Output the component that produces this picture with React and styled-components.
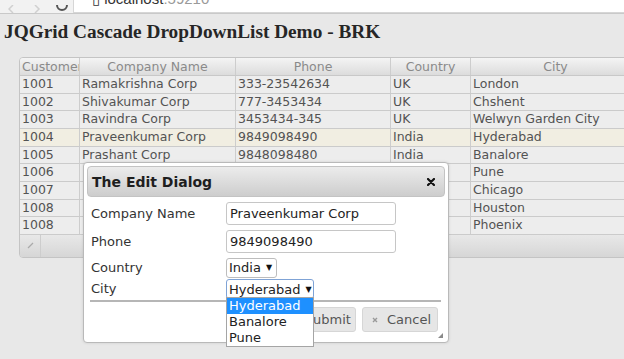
import React from "react";
import styled, { createGlobalStyle } from "styled-components";

const GlobalStyle = createGlobalStyle`
  html, body {
    margin: 0;
    padding: 0;
    background: #e8e8e8;
    overflow: hidden;
  }
`;

const rows = [
  ["1001", "Ramakrishna Corp", "333-23542634", "UK", "London"],
  ["1002", "Shivakumar Corp", "777-3453434", "UK", "Chshent"],
  ["1003", "Ravindra Corp", "3453434-345", "UK", "Welwyn Garden City"],
  ["1004", "Praveenkumar Corp", "9849098490", "India", "Hyderabad"],
  ["1005", "Prashant Corp", "9848098480", "India", "Banalore"],
  ["1006", "", "", "", "Pune"],
  ["1007", "", "", "", "Chicago"],
  ["1008", "", "", "", "Houston"],
  ["1008", "", "", "", "Phoenix"],
];

const COLS = "60px 156px 155px 80px 170px";

// 전체 페이지
const Page = styled.div`
  position: relative;
  width: 624px;
  height: 359px;
  overflow: hidden;
  background: #e8e8e8;
  font-family: "DejaVu Sans", Verdana, sans-serif;
`;

// 브라우저 주소창 (잘린 부분)
const BrowserBar = styled.div`
  display: flex;
  height: 13px;
  background: #f2f2f2;
  border-bottom: 1px solid #c9c9c9;
  overflow: hidden;
`;

const NavArea = styled.div`
  width: 73px;
  display: flex;
  align-items: flex-end;
  gap: 14px;
  padding-left: 8px;
  box-sizing: border-box;
`;

const AddressBox = styled.div`
  flex: 1;
  height: 12px;
  background: #fff;
  border-left: 1px solid #d6d6d6;
  border-bottom: 1px solid #d6d6d6;
  overflow: hidden;
  padding-left: 18px;
  font-family: "Liberation Sans", Arial, sans-serif;
  font-size: 15px;
  line-height: 15px;
  color: #333;
`;

const AddressText = styled.div`
  margin-top: -9px;
  span {
    color: #9a9a9a;
  }
`;

const Title = styled.h1`
  margin: 6px 0 13px 4px;
  font-family: "Liberation Serif", "Times New Roman", serif;
  font-size: 19.3px;
  line-height: 24px;
  font-weight: bold;
  color: #262626;
`;

// 그리드
const GridBox = styled.div`
  margin-left: 19px;
  width: 640px;
  border: 1px solid #c4c4c4;
  border-radius: 4px 0 0 4px;
  background: #ececec;
  overflow: hidden;
`;

const HeaderRow = styled.div`
  display: grid;
  grid-template-columns: ${COLS};
  height: 17px;
  background: linear-gradient(#f4f4f4, #dcdcdc);
  border-bottom: 1px solid #c8c8c8;
`;

const HeaderCell = styled.div`
  border-right: 1px solid #cdcdcd;
  color: #8a8a8a;
  font-size: 12.5px;
  line-height: 17px;
  white-space: nowrap;
  overflow: hidden;
  text-overflow: clip;
  padding: 0 2px;
  text-align: ${(p) => (p.$left ? "left" : "center")};
`;

const Row = styled.div`
  display: grid;
  grid-template-columns: ${COLS};
  height: 17.67px;
  box-sizing: border-box;
  border-bottom: 1px solid #cbcbcb;
  background: ${(p) => (p.$selected ? "#f1eee2" : "#ededed")};
`;

const Cell = styled.div`
  border-right: 1px solid #cdcdcd;
  color: #535353;
  font-size: 12.5px;
  line-height: 16px;
  padding-left: 2px;
  white-space: nowrap;
  overflow: hidden;
`;

const Footer = styled.div`
  display: flex;
  height: 22px;
  background: linear-gradient(#e8e8e8, #d6d6d6);
`;

const FooterIconCell = styled.div`
  width: 20px;
  border-right: 1px solid #cdcdcd;
  display: flex;
  align-items: center;
  justify-content: center;
`;

// 편집 다이얼로그
const Dialog = styled.div`
  position: absolute;
  left: 83px;
  top: 162px;
  width: 366px;
  height: 181px;
  box-sizing: border-box;
  background: #fff;
  border: 1px solid #b9b9b9;
  border-radius: 4px;
  box-shadow: 0 0 3px rgba(0, 0, 0, 0.12);
  padding: 3px;
  display: flex;
  flex-direction: column;
`;

const TitleBar = styled.div`
  display: flex;
  align-items: center;
  justify-content: space-between;
  height: 31px;
  box-sizing: border-box;
  padding: 0 9px 0 4px;
  background: linear-gradient(#ececec, #cdcdcd);
  border: 1px solid #c3c3c3;
  border-radius: 4px;
  font-size: 14px;
  font-weight: bold;
  color: #1e1e1e;
`;

const Form = styled.div`
  display: flex;
  flex-direction: column;
  padding: 0 4px;
`;

const FormRow = styled.div`
  display: grid;
  grid-template-columns: 135px auto;
  align-items: center;
  margin-top: ${(p) => p.$gap}px;
`;

const Label = styled.div`
  font-size: 13px;
  color: #333;
`;

const TextInput = styled.div`
  width: 170px;
  height: 23px;
  box-sizing: border-box;
  border: 1px solid #c6c6c6;
  border-radius: 3px;
  padding-left: 3px;
  font-size: 13px;
  line-height: 21px;
  color: #222;
`;

const Select = styled.div`
  display: inline-flex;
  align-items: center;
  gap: 5px;
  width: ${(p) => p.$width}px;
  height: 20px;
  box-sizing: border-box;
  border: 1px solid ${(p) => (p.$focus ? "#7fa3d6" : "#bdbdbd")};
  border-radius: 3px;
  padding-left: 2px;
  font-size: 13px;
  color: #222;
`;

const Arrow = styled.span`
  font-size: 8px;
  color: #111;
`;

const Separator = styled.div`
  margin: 1px 4px 0 3px;
  border-top: 2px solid #b6b6b6;
`;

const ButtonRow = styled.div`
  display: flex;
  justify-content: flex-end;
  gap: 6px;
  margin-top: 5px;
  padding-right: 7px;
`;

const Button = styled.div`
  display: flex;
  align-items: center;
  gap: 9px;
  height: 25px;
  box-sizing: border-box;
  padding: 0 ${(p) => p.$padRight || 6}px 0 9px;
  background: #e6e6e6;
  border: 1px solid #d6d6d6;
  border-radius: 3px;
  font-size: 13px;
  color: #555;
`;

const ResizeGrip = styled.div`
  position: absolute;
  right: 5px;
  bottom: 4px;
  width: 0;
  height: 0;
  border-left: 5px solid transparent;
  border-bottom: 5px solid #8a8a8a;
`;

// 열린 드롭다운 목록
const DropList = styled.div`
  position: absolute;
  left: 226px;
  top: 297px;
  width: 88px;
  box-sizing: border-box;
  background: #fff;
  border: 1px solid #a5a5a5;
  font-size: 13px;
  color: #222;
`;

const DropItem = styled.div`
  height: 16px;
  line-height: 16px;
  padding-left: 2px;
  background: ${(p) => (p.$active ? "#1e90ff" : "transparent")};
  color: ${(p) => (p.$active ? "#fff" : "#222")};
`;

const CloseIcon = () => (
  <svg width="8" height="8" viewBox="0 0 8 8">
    <path d="M1 1 L7 7 M7 1 L1 7" stroke="#111" strokeWidth="2.2" strokeLinecap="round" />
  </svg>
);

const SmallX = () => (
  <svg width="6" height="6" viewBox="0 0 6 6">
    <path d="M1 1 L5 5 M5 1 L1 5" stroke="#999" strokeWidth="1.4" />
  </svg>
);

const App = () => {
  return (
    <Page>
      <GlobalStyle />
      <BrowserBar>
        <NavArea>
          <svg width="10" height="8" viewBox="0 0 10 8">
            <path d="M5 0 L1 4 L5 8" stroke="#d0d0d0" strokeWidth="1.5" fill="none" />
          </svg>
          <svg width="10" height="8" viewBox="0 0 10 8">
            <path d="M3 0 L7 4 L3 8" stroke="#d0d0d0" strokeWidth="1.5" fill="none" />
          </svg>
          <svg width="12" height="8" viewBox="0 0 12 8">
            <path d="M1 0 A5 5 0 0 0 11 0" stroke="#555" strokeWidth="2" fill="none" />
          </svg>
        </NavArea>
        <AddressBox>
          <AddressText>
            ▯ localhost<span>:59210</span>
          </AddressText>
        </AddressBox>
      </BrowserBar>

      <Title>JQGrid Cascade DropDownList Demo - BRK</Title>

      <GridBox>
        <HeaderRow>
          <HeaderCell $left>Customer</HeaderCell>
          <HeaderCell>Company Name</HeaderCell>
          <HeaderCell>Phone</HeaderCell>
          <HeaderCell>Country</HeaderCell>
          <HeaderCell>City</HeaderCell>
        </HeaderRow>
        {rows.map((r, i) => (
          <Row key={i} $selected={i === 3}>
            {r.map((c, j) => (
              <Cell key={j}>{c}</Cell>
            ))}
          </Row>
        ))}
        <Footer>
          <FooterIconCell>
            <svg width="7" height="7" viewBox="0 0 7 7">
              <path d="M1 6 L6 1" stroke="#aaa" strokeWidth="1.2" />
            </svg>
          </FooterIconCell>
        </Footer>
      </GridBox>

      <Dialog>
        <TitleBar>
          The Edit Dialog
          <CloseIcon />
        </TitleBar>
        <Form>
          <FormRow $gap={5}>
            <Label>Company Name</Label>
            <TextInput>Praveenkumar Corp</TextInput>
          </FormRow>
          <FormRow $gap={5}>
            <Label>Phone</Label>
            <TextInput>9849098490</TextInput>
          </FormRow>
          <FormRow $gap={4}>
            <Label>Country</Label>
            <div>
              <Select $width={51}>
                India <Arrow>▼</Arrow>
              </Select>
            </div>
          </FormRow>
          <FormRow $gap={1}>
            <Label>City</Label>
            <div>
              <Select $width={88} $focus>
                Hyderabad <Arrow>▼</Arrow>
              </Select>
            </div>
          </FormRow>
        </Form>
        <Separator />
        <ButtonRow>
          <Button $padRight={4}>✔ Submit</Button>
          <Button>
            <SmallX /> Cancel
          </Button>
        </ButtonRow>
        <ResizeGrip />
      </Dialog>

      <DropList>
        <DropItem $active>Hyderabad</DropItem>
        <DropItem>Banalore</DropItem>
        <DropItem>Pune</DropItem>
      </DropList>
    </Page>
  );
};

export default App;
